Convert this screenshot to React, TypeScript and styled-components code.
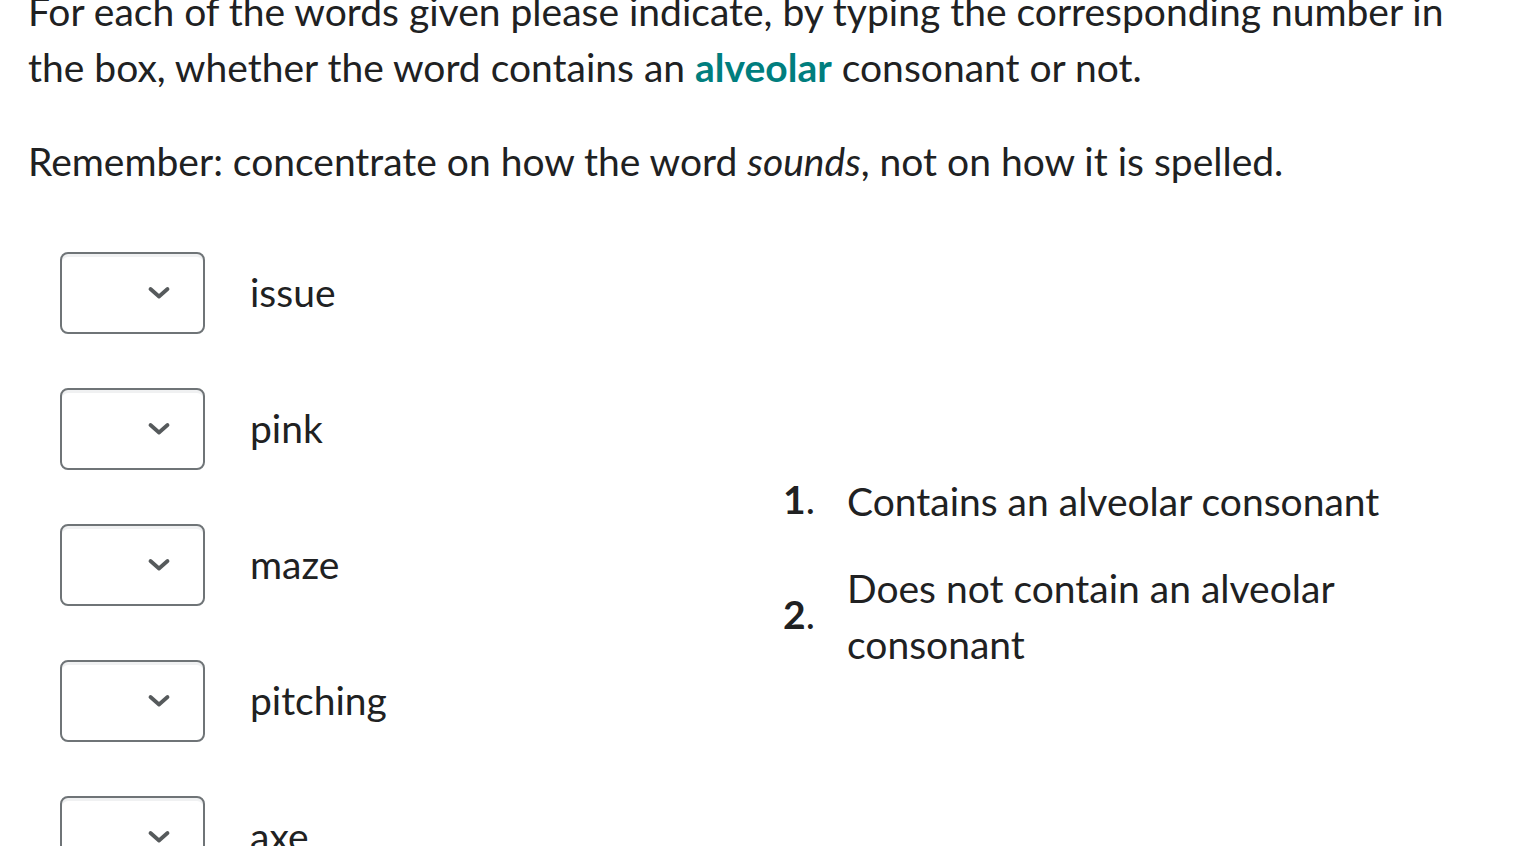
import React from 'react';
import styled, { createGlobalStyle } from 'styled-components';

const words = ['issue', 'pink', 'maze', 'pitching', 'axe'];

const choices = [
  { num: 1, label: 'Contains an alveolar consonant' },
  { num: 2, label: 'Does not contain an alveolar consonant' },
];

const GlobalStyle = createGlobalStyle`
  html, body {
    margin: 0;
    padding: 0;
    background: #ffffff;
    overflow: hidden;
  }
  body {
    font-family: Lato, 'Open Sans', sans-serif;
    color: #202122;
  }
`;

const Chevron = (): JSX.Element => (
  <svg width="24" height="15" viewBox="0 0 24 15" aria-hidden="true">
    <polyline
      points="3.5,4 12,11.5 20.5,4"
      fill="none"
      stroke="#565a5c"
      strokeWidth="3.8"
      strokeLinecap="round"
      strokeLinejoin="round"
    />
  </svg>
);

const App = (): JSX.Element => {
  return (
    <Page>
      <GlobalStyle />
      <Intro>
        For each of the words given please indicate, by typing the corresponding number in
        the box, whether the word contains an <Term>alveolar</Term> consonant or not.
      </Intro>
      <Intro>
        Remember: concentrate on how the word <em>sounds</em>, not on how it is spelled.
      </Intro>
      <Question>
        <Words>
          {words.map((word) => (
            <WordRow key={word}>
              <SelectBox>
                <Chevron />
              </SelectBox>
              <Word>{word}</Word>
            </WordRow>
          ))}
        </Words>
        <Choices>
          {choices.map((choice) => (
            <ChoiceRow key={choice.num}>
              <ChoiceNum>
                {choice.num}
                <Dot>.</Dot>
              </ChoiceNum>
              <ChoiceText>{choice.label}</ChoiceText>
            </ChoiceRow>
          ))}
        </Choices>
      </Question>
    </Page>
  );
};

const Page = styled.div`
  margin-top: -16px;
  padding: 0 40px 0 28px;
  font-size: 39px;
  line-height: 55.5px;
`;

const Intro = styled.p`
  margin: 0 0 39px 0;
  em {
    font-style: italic;
  }
`;

const Term = styled.strong`
  color: #007e7e;
  font-weight: 700;
`;

const Question = styled.div`
  display: flex;
  align-items: flex-start;
  padding-top: 23px;
`;

const Words = styled.div`
  width: 755px;
  padding-left: 32px;
  box-sizing: border-box;
  display: flex;
  flex-direction: column;
  gap: 54px;
`;

const WordRow = styled.div`
  display: flex;
  align-items: center;
  gap: 45px;
`;

const SelectBox = styled.div`
  width: 145px;
  height: 82px;
  box-sizing: border-box;
  border: 2px solid #6f7477;
  border-radius: 8px;
  box-shadow: inset 0 3px 0 0 #f0f1f2;
  background: #ffffff;
  display: flex;
  align-items: center;
  justify-content: flex-end;
  padding-right: 32px;
`;

const Word = styled.span`
  white-space: nowrap;
`;

const Choices = styled.div`
  padding-top: 222px;
  display: flex;
  flex-direction: column;
  gap: 32px;
`;

const ChoiceRow = styled.div`
  display: grid;
  grid-template-columns: 64px 580px;
  align-items: center;
`;

const ChoiceNum = styled.span`
  font-weight: 700;
  position: relative;
  top: -2px;
`;

const Dot = styled.span`
  font-weight: 400;
`;

const ChoiceText = styled.span``;

export default App;
